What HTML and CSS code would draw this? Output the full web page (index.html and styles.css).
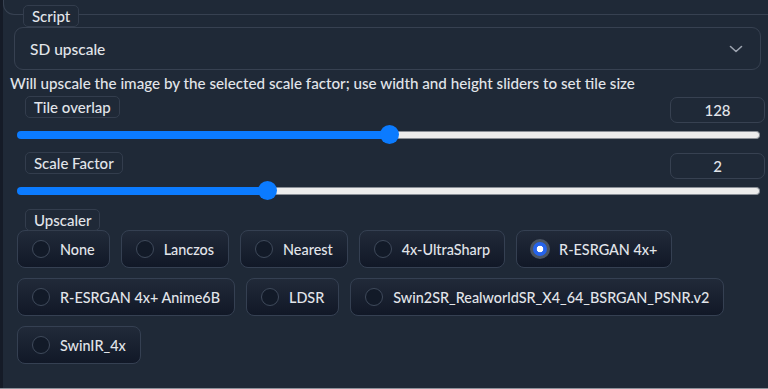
FILE: index.html
```html
<!DOCTYPE html>
<html>
<head>
<meta charset="utf-8">
<link rel="stylesheet" href="styles.css">
</head>
<body>
<div class="page">
  <div class="panel">
    <div class="prev"></div>

    <div class="field">
      <span class="tag tag-script">Script</span>
      <div class="dropdown">
        <span>SD upscale</span>
        <svg class="chev" width="14" height="8" viewBox="0 0 14 8"><path d="M1.5 1.5 L7 6.5 L12.5 1.5" fill="none" stroke="#9ca3af" stroke-width="1.6" stroke-linecap="round" stroke-linejoin="round"/></svg>
      </div>
    </div>

    <p class="desc">Will upscale the image by the selected scale factor; use width and height sliders to set tile size</p>

    <div class="slider-block first">
      <div class="slider-head">
        <span class="tag">Tile overlap</span>
        <span class="num">128</span>
      </div>
      <div class="range">
        <div class="fill" style="width:372px"></div>
        <div class="thumb"></div>
        <div class="rest"></div>
      </div>
    </div>

    <div class="slider-block second">
      <div class="slider-head">
        <span class="tag">Scale Factor</span>
        <span class="num">2</span>
      </div>
      <div class="range">
        <div class="fill" style="width:250px"></div>
        <div class="thumb"></div>
        <div class="rest"></div>
      </div>
    </div>

    <div class="radio-block">
      <span class="tag">Upscaler</span>
      <div class="radios">
        <label class="opt"><span class="dot"></span>None</label>
        <label class="opt"><span class="dot"></span>Lanczos</label>
        <label class="opt"><span class="dot"></span>Nearest</label>
        <label class="opt"><span class="dot"></span>4x-UltraSharp</label>
        <label class="opt"><span class="dot on"></span>R-ESRGAN 4x+</label>
        <label class="opt"><span class="dot"></span>R-ESRGAN 4x+ Anime6B</label>
        <label class="opt"><span class="dot"></span>LDSR</label>
        <label class="opt"><span class="dot"></span>Swin2SR_RealworldSR_X4_64_BSRGAN_PSNR.v2</label>
        <label class="opt"><span class="dot"></span>SwinIR_4x</label>
      </div>
    </div>
  </div>
</div>
</body>
</html>
```

FILE: styles.css
```css
* { box-sizing: border-box; }

html, body {
  margin: 0;
  padding: 0;
  background: #151b27;
}

body {
  width: 768px;
  height: 389px;
  overflow: hidden;
  font-family: Lato, "Noto Sans", sans-serif;
  font-weight: 500;
  font-size: 15px;
  color: #e2e5ea;
}

.page {
  height: 389px;
  padding-left: 3px;
  border-bottom: 1px solid #8d929b;
}

.panel {
  height: 388px;
  background: #1f2937;
}

.prev {
  height: 15px;
  width: 800px;
  border-left: 1px solid #374151;
  border-bottom: 1px solid #374151;
  border-bottom-left-radius: 11px;
}

.tag {
  display: inline-flex;
  align-items: center;
  height: 22px;
  padding: 0 8px;
  border: 1px solid #333d4d;
  border-radius: 5px;
  background: #1f2937;
  line-height: 1;
}

.field {
  display: flex;
  flex-direction: column;
  align-items: flex-start;
  margin-top: -10px;
}

.tag-script {
  margin-left: 20px;
  position: relative;
  z-index: 1;
}

.dropdown {
  margin-left: 11px;
  width: 747px;
  height: 43px;
  border: 1px solid #374151;
  border-radius: 9px;
  display: flex;
  align-items: center;
  justify-content: space-between;
  padding: 0 17px 0 15px;
  font-size: 15.5px;
}

.chev { margin-top: 1px; }

.desc {
  margin: 3px 0 0 7px;
  height: 20px;
  line-height: 20px;
  white-space: nowrap;
  font-size: 15.2px;
}

.slider-block { margin-left: 14px; width: 748px; }
.slider-block.first { margin-top: 3px; }
.slider-block.second { margin-top: 8px; }

.slider-head {
  display: flex;
  justify-content: space-between;
  align-items: flex-start;
  padding-left: 8px;
}

.num {
  width: 95px;
  height: 26px;
  margin-top: 1px;
  border: 1px solid #374151;
  border-radius: 7px;
  display: flex;
  align-items: center;
  justify-content: center;
}

.range {
  display: flex;
  align-items: center;
  height: 19px;
  margin-top: 2px;
  width: 743px;
}

.fill {
  height: 8px;
  background: #0b7bff;
  border-radius: 4px 0 0 4px;
  flex: none;
}

.thumb {
  flex: none;
  width: 19px;
  height: 19px;
  border-radius: 50%;
  background: #0b7bff;
  margin-left: -9.5px;
  position: relative;
  z-index: 1;
}

.rest {
  flex: 1;
  height: 8px;
  margin-left: -9.5px;
  background: #ececec;
  border: 1px solid #8a8f97;
  border-left: none;
  border-radius: 0 4px 4px 0;
}

.radio-block {
  margin-top: 9px;
  display: flex;
  flex-direction: column;
  align-items: flex-start;
}

.radio-block .tag {
  margin-left: 22px;
  position: relative;
  z-index: 1;
}

.radios {
  margin-left: 14px;
  margin-top: -1px;
  width: 730px;
  display: flex;
  flex-wrap: wrap;
  gap: 10px 11px;
}

.opt {
  display: flex;
  align-items: center;
  gap: 10px;
  height: 38px;
  padding: 0 14px;
  border: 1px solid #354052;
  border-radius: 8px;
  background: linear-gradient(#212a39, #111827);
  white-space: nowrap;
  font-size: 14.4px;
}

.dot {
  width: 18px;
  height: 18px;
  border-radius: 50%;
  background: #121a28;
  border: 1px solid #3f4a5b;
  flex: none;
}

.dot.on {
  width: 20px;
  height: 20px;
  margin: -1px;
  border: 3px solid #4b5563;
  background: radial-gradient(circle, #ffffff 0 3px, #2563eb 3.6px);
}
```
